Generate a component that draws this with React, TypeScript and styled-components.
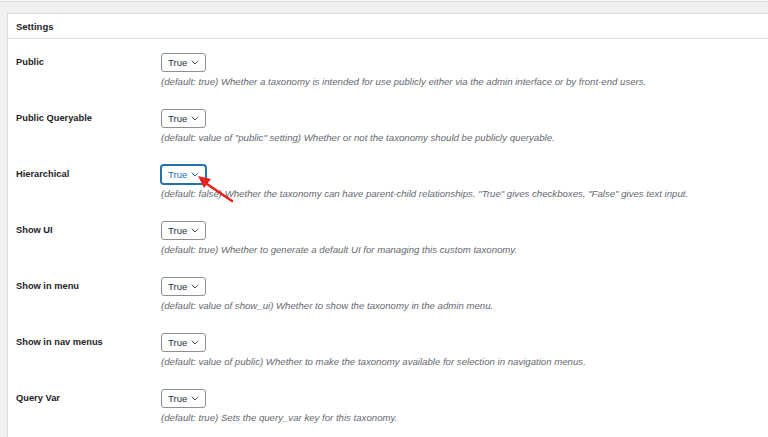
import React from "react";
import styled, { createGlobalStyle } from "styled-components";

const Global = createGlobalStyle`
  html, body { margin: 0; padding: 0; }
  body {
    background: #f0f0f1;
    font-family: "Liberation Sans", Arial, sans-serif;
    overflow: hidden;
    width: 768px;
    height: 437px;
  }
`;

const TopEdge = styled.div`
  height: 1px;
  background: #f6f7f7;
  border-bottom: 1px solid #dcdcde;
`;

const Wrap = styled.div`
  padding: 11px 0 0 7px;
`;

const Panel = styled.section`
  background: #fff;
  border: 1px solid #dcdcde;
  border-right: none;
  border-bottom: none;
  margin-right: -20px;
  height: 423px;
  overflow: hidden;
`;

const Header = styled.h2`
  margin: 0;
  height: 24px;
  display: flex;
  align-items: center;
  padding-left: 8px;
  font-size: 9.5px;
  font-weight: 700;
  color: #1d2327;
  border-bottom: 1px solid #dcdcde;
`;

const Rows = styled.div`
  display: flex;
  flex-direction: column;
`;

const Row = styled.div`
  display: grid;
  grid-template-columns: 145px 1fr;
  height: 56px;
  padding: 14px 0 0 8px;
  box-sizing: border-box;
`;

const Label = styled.div`
  font-size: 9.3px;
  font-weight: 700;
  line-height: 19px;
  color: #1d2327;
`;

const Field = styled.div`
  position: relative;
  display: flex;
  flex-direction: column;
  align-items: flex-start;
`;

const Select = styled.div<{ $focused?: boolean }>`
  box-sizing: border-box;
  width: 45px;
  height: 19px;
  display: flex;
  align-items: center;
  justify-content: space-between;
  padding: 0 6px 0 6px;
  border: 1px solid ${(p) => (p.$focused ? "#2271b1" : "#8c8f94")};
  box-shadow: ${(p) => (p.$focused ? "0 0 0 1px #2271b1" : "none")};
  border-radius: 3px;
  background: #fff;
  font-size: 9.6px;
  color: ${(p) => (p.$focused ? "#2271b1" : "#2c3338")};
`;

const Chevron = styled.svg`
  width: 8px;
  height: 5px;
  display: block;
`;

const Desc = styled.p`
  margin: 4px 0 0 0;
  font-size: 9.65px;
  line-height: 12px;
  font-style: italic;
  color: #646970;
  white-space: nowrap;
`;

const Arrow = styled.svg`
  position: absolute;
  left: 31px;
  top: 5px;
  width: 50px;
  height: 40px;
  pointer-events: none;
`;

type Item = { label: string; desc: string; focused?: boolean };

const items: Item[] = [
  {
    label: "Public",
    desc: "(default: true) Whether a taxonomy is intended for use publicly either via the admin interface or by front-end users.",
  },
  {
    label: "Public Queryable",
    desc: '(default: value of "public" setting) Whether or not the taxonomy should be publicly queryable.',
  },
  {
    label: "Hierarchical",
    desc: '(default: false) Whether the taxonomy can have parent-child relationships. "True" gives checkboxes, "False" gives text input.',
    focused: true,
  },
  {
    label: "Show UI",
    desc: "(default: true) Whether to generate a default UI for managing this custom taxonomy.",
  },
  {
    label: "Show in menu",
    desc: "(default: value of show_ui) Whether to show the taxonomy in the admin menu.",
  },
  {
    label: "Show in nav menus",
    desc: "(default: value of public) Whether to make the taxonomy available for selection in navigation menus.",
  },
  {
    label: "Query Var",
    desc: "(default: true) Sets the query_var key for this taxonomy.",
  },
];

export default function App() {
  return (
    <>
      <Global />
      <TopEdge />
      <Wrap>
        <Panel>
          <Header>Settings</Header>
          <Rows>
            {items.map((it) => (
              <Row key={it.label}>
                <Label>{it.label}</Label>
                <Field>
                  <Select $focused={it.focused}>
                    <span>True</span>
                    <Chevron viewBox="0 0 8 5">
                      <path
                        d="M0.8 0.8 L4 4 L7.2 0.8"
                        fill="none"
                        stroke={it.focused ? "#2271b1" : "#50575e"}
                        strokeWidth="1"
                      />
                    </Chevron>
                  </Select>
                  <Desc>{it.desc}</Desc>
                  {it.focused && (
                    <Arrow viewBox="0 0 50 40">
                      <line x1="40" y1="31" x2="12" y2="12" stroke="#e8231c" strokeWidth="2.6" strokeLinecap="round" />
                      <polygon points="6,6 19,9 12,18" fill="#e8231c" />
                    </Arrow>
                  )}
                </Field>
              </Row>
            ))}
          </Rows>
        </Panel>
      </Wrap>
    </>
  );
}
